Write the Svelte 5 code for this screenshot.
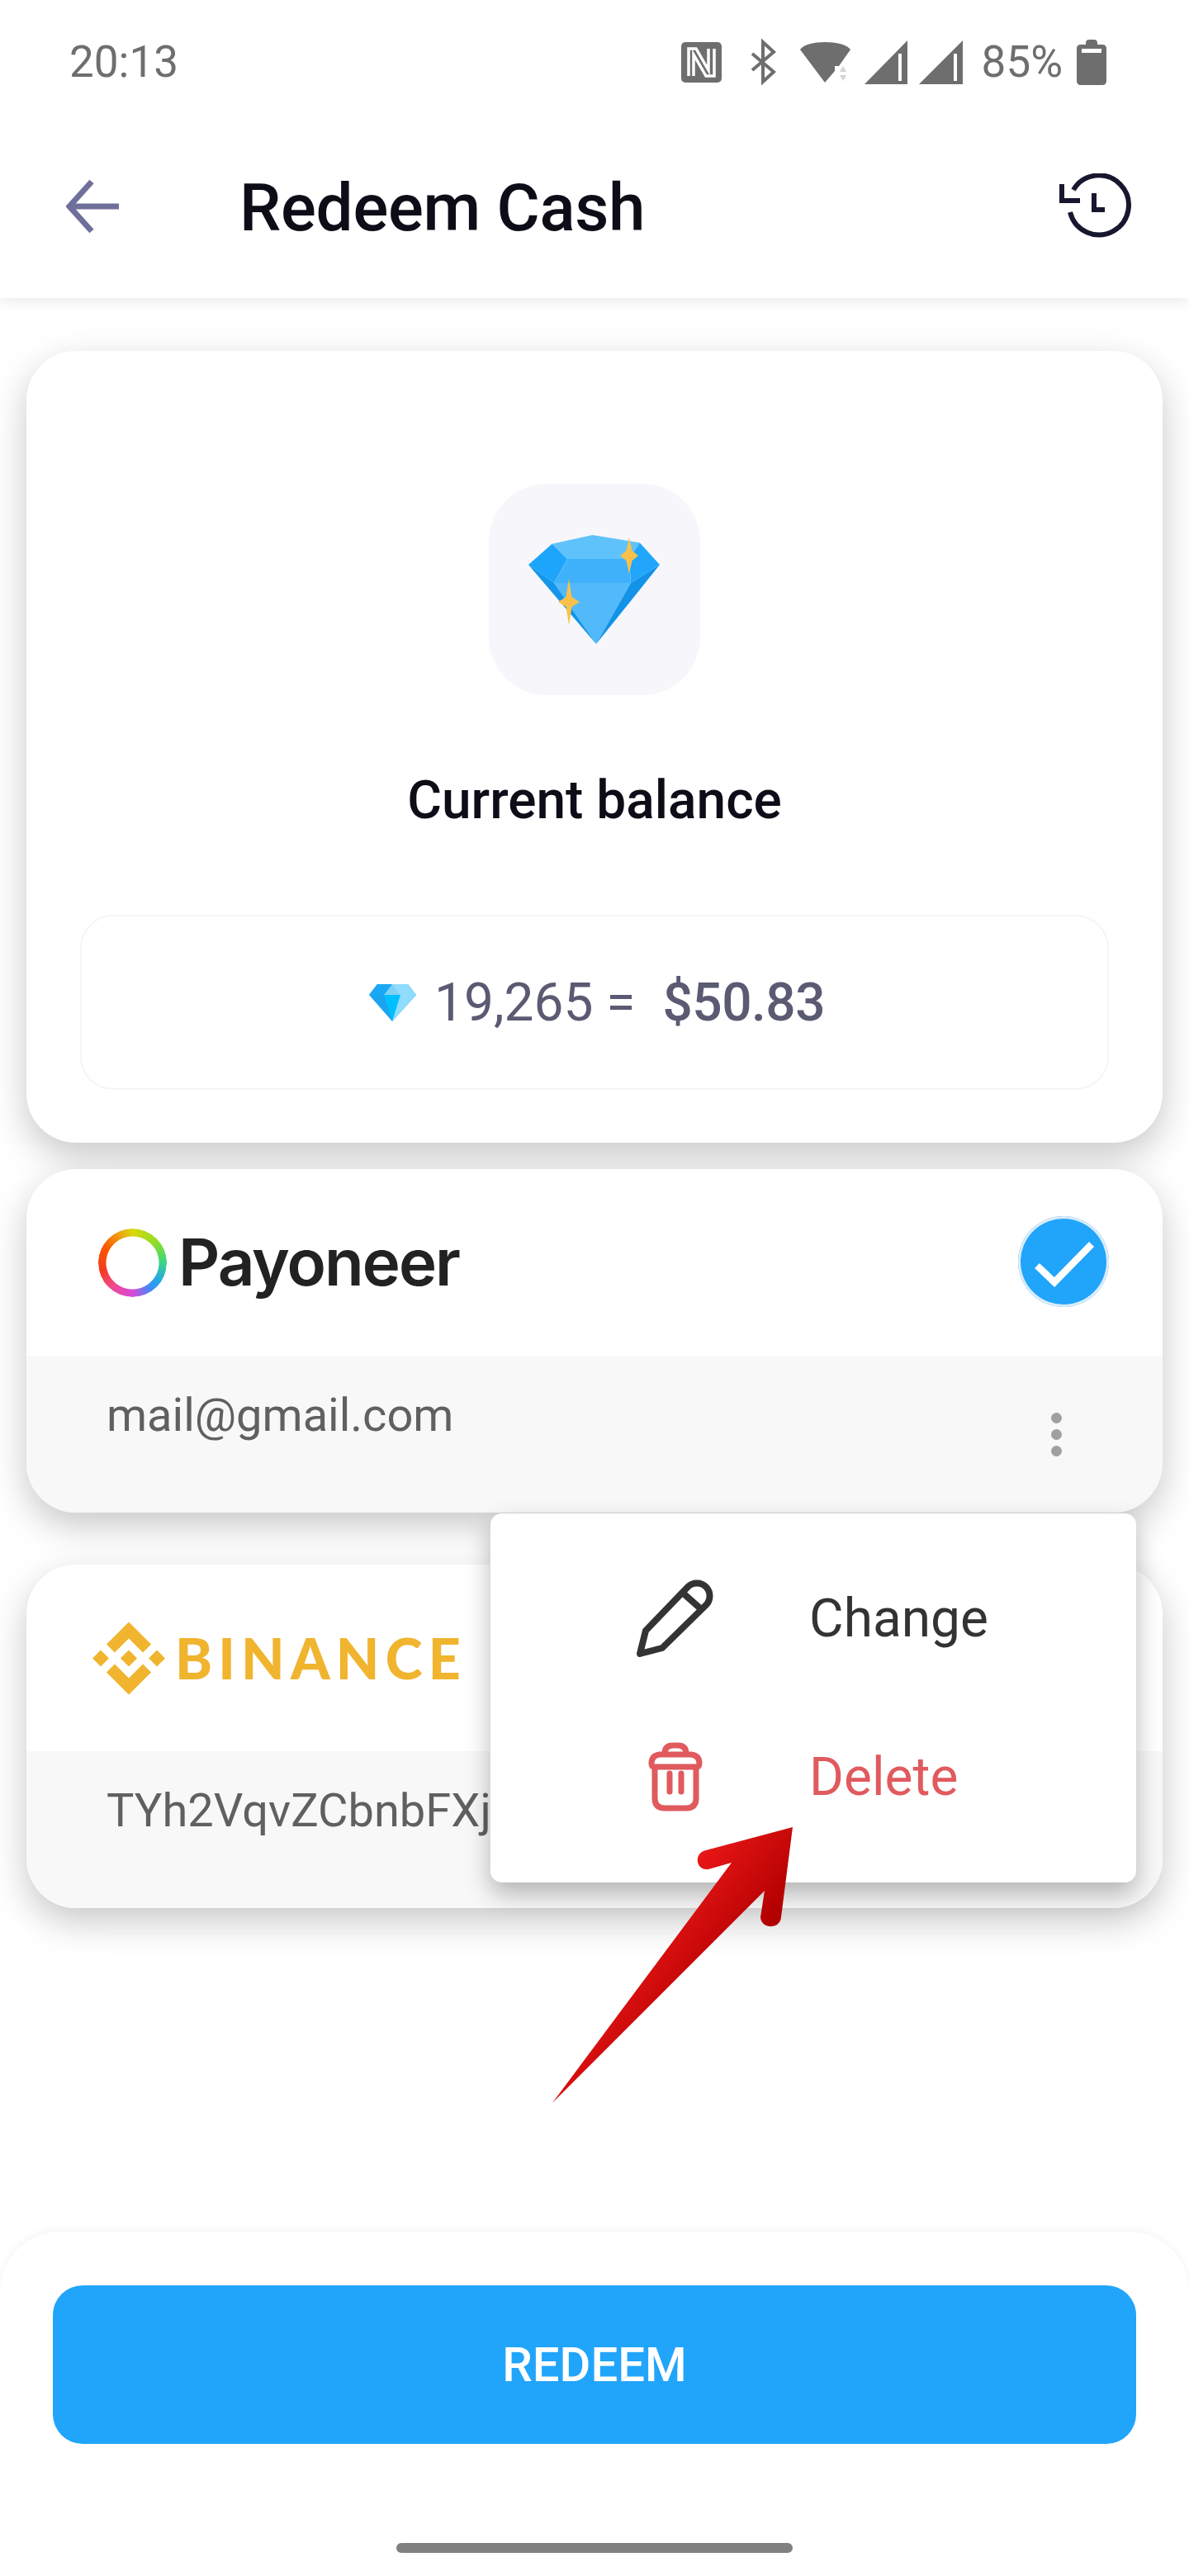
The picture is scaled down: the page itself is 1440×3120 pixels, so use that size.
<script>
  const accounts = [
    { id: 'payoneer', value: 'mail@gmail.com' },
    { id: 'binance', value: 'TYh2VqvZCbnbFXj' }
  ];
  const star = (cx, cy, w, h) =>
    [[cx, cy - h], [cx + 3.5, cy - 6], [cx + w, cy], [cx + 3.5, cy + 6], [cx, cy + h], [cx - 3.5, cy + 6], [cx - w, cy], [cx - 3.5, cy - 6]]
      .map((p) => p.join(',')).join(' ');
</script>

<div class="page">
  <header class="topbar">
    <div class="status">
      <span class="time">20:13</span>
      <div class="status-right">
        <svg class="sys" width="341" height="56" viewBox="0 0 341 56" aria-hidden="true">
          <rect x="0" y="4" width="49" height="49" rx="5" fill="#6e6e6e"/>
          <path d="M9 45 V12 H18 L33 38 V12 M40 12 V45 H30 L15 19 V45" fill="none" stroke="#fff" stroke-width="3.5"/>
          <path d="M86 18 L112 40 L99 52 V4 L112 16 L86 38" fill="none" stroke="#6e6e6e" stroke-width="4"/>
          <path d="M144 13 C152 1 196 1 205 13 L191 33 H186 V39 L174 53 Z" fill="#6e6e6e"/>
          <path d="M192 40 l4 -7 l4 7 Z M192 44 l4 7 l4 -7 Z" fill="#d4d4d4"/>
          <path d="M222 55 L274 2 V55 Z" fill="#6e6e6e"/>
          <rect x="263" y="18" width="4" height="33" fill="#fff"/>
          <path d="M288 55 L341 2 V55 Z" fill="#6e6e6e"/>
          <rect x="330" y="18" width="4" height="33" fill="#fff"/>
        </svg>
        <span class="pct">85%</span>
        <svg width="36" height="56" viewBox="0 0 36 56" aria-hidden="true">
          <path d="M11 5 Q11 1 15 1 H21 Q25 1 25 5 V7 H31 Q36 7 36 12 V51 Q36 56 31 56 H5 Q0 56 0 51 V12 Q0 7 5 7 H11 Z" fill="#6e6e6e"/>
          <rect x="6" y="12" width="24" height="5" fill="#fff"/>
        </svg>
      </div>
    </div>
    <div class="titlebar">
      <svg class="back" width="66" height="66" viewBox="0 0 66 66" aria-hidden="true">
        <path d="M64 33 H6 M31 3 L4 33 L31 63" fill="none" stroke="#6f6f9c" stroke-width="7"/>
      </svg>
      <h1>Redeem Cash</h1>
      <svg class="history" width="90" height="80" viewBox="0 0 90 80" aria-hidden="true">
        <path d="M18 20 A36 36 0 1 1 14 47" fill="none" stroke="#17172f" stroke-width="6"/>
        <path d="M4 13 V33 H26" fill="none" stroke="#17172f" stroke-width="6"/>
        <path d="M43 24 V44 H56" fill="none" stroke="#17172f" stroke-width="6"/>
      </svg>
    </div>
  </header>

  <main class="content">
    <section class="card balance">
      <div class="tile">
        <svg width="160" height="132" viewBox="0 0 160 132" aria-hidden="true">
          <polygon points="28.600,10.700 77.500,0 134.700,9.300 122,29 47,29" fill="#60c2fb"/>
          <polygon points="0,36 28.600,10.700 47,29 31,58" fill="#1da5fb"/>
          <polygon points="134.700,9.300 159,36 124,58 122,29" fill="#22a6fb"/>
          <polygon points="47,29 122,29 124,58 31,58" fill="#3fb2fb"/>
          <polygon points="31,58 124,58 82,132" fill="#52b9fb"/>
          <polygon points="0,36 31,58 82,132" fill="#1495ea"/>
          <polygon points="159,36 124,58 82,132" fill="#1293e8"/>
          <polygon points={star(122, 25, 11, 22)} fill="#f8c14a"/>
          <polygon points={star(49, 81, 13, 28)} fill="#f8c14a"/>
        </svg>
      </div>
      <h2>Current balance</h2>
      <div class="rate">
        <svg width="57" height="45" viewBox="0 0 57 45" aria-hidden="true">
          <polygon points="10,0 47,0 57,13 28,45 0,13" fill="#1ba4f0"/>
          <polygon points="28,0 47,0 57,13 28,45" fill="#8fdcff"/>
          <polygon points="18,13 38,13 28,45" fill="#00bfff"/>
          <polygon points="10,0 28,0 18,13 0,13" fill="#19a8f5"/>
          <polygon points="28,0 38,13 18,13" fill="#7fd0f5"/>
        </svg>
        <span class="gems">19,265 =</span>
        <strong>$50.83</strong>
      </div>
    </section>

    {#each accounts as account (account.id)}
      <section class="card account {account.id}">
        <div class="account-head">
          {#if account.id === 'payoneer'}
            <span class="ring"></span>
            <span class="payoneer-name">Payoneer</span>
            <span class="check">
              <svg width="110" height="110" viewBox="0 0 110 110" aria-hidden="true">
                <path d="M23 60 L44 80 L89 34" fill="none" stroke="#fff" stroke-width="8.500"/>
              </svg>
            </span>
          {:else}
            <svg class="binance-mark" width="88" height="89" viewBox="0 0 126.610 126.610" aria-hidden="true">
              <path fill="#f0b42e" d="M38.730 53.200l24.590-24.580 24.600 24.600 14.300-14.310L63.320 0 24.420 38.900l14.310 14.300zM0 63.310l14.310-14.310 14.310 14.310-14.310 14.310zM38.730 73.410l24.590 24.590 24.600-24.600 14.310 14.290-38.900 38.910-38.910-38.880-.02-.02 14.330-14.290zM97.990 63.310l14.310-14.310 14.310 14.310-14.310 14.310zM77.830 63.300L63.320 48.780 52.590 59.510l-1.240 1.230-2.540 2.540 14.510 14.500 14.510-14.470z"/>
            </svg>
            <span class="binance-name">BINANCE</span>
          {/if}
        </div>
        <div class="account-body">
          <span class="value">{account.value}</span>
          {#if account.id === 'payoneer'}
            <span class="dots"><i></i><i></i><i></i></span>
          {/if}
        </div>
      </section>
    {/each}
  </main>

  <div class="menu">
    <div class="menu-row">
      <span class="menu-icon">
        <svg width="94" height="94" viewBox="0 0 94 94" aria-hidden="true">
          <path d="M4 90 L11 62 L62 9 C68 3 78 3 84 9 C90 15 90 25 84 31 L31 83 Z M59 19 L77 35" fill="none" stroke="#333" stroke-width="8" stroke-linejoin="round" stroke-linecap="round"/>
        </svg>
      </span>
      <span class="menu-text">Change</span>
    </div>
    <div class="menu-row danger">
      <span class="menu-icon">
        <svg width="66" height="84" viewBox="0 0 66 84" aria-hidden="true">
          <path d="M8 30 V68 Q8 80 20 80 H46 Q58 80 58 68 V30 M4 26 Q4 16 14 15 H52 Q62 16 62 26 Q62 30 58 30 H8 Q4 30 4 26 Z M20 14 Q20 4 30 4 H36 Q46 4 46 14 M26 38 V60 M40 38 V60" fill="none" stroke="#e05a5e" stroke-width="7" stroke-linejoin="round" stroke-linecap="round"/>
        </svg>
      </span>
      <span class="menu-text">Delete</span>
    </div>
  </div>

  <svg class="pointer" width="300" height="340" viewBox="660 2210 300 340" aria-hidden="true">
    <defs>
      <linearGradient id="pointerFill" x1="0.45" y1="0.05" x2="0.85" y2="0.4">
        <stop offset="0" stop-color="#ff1f1f"/>
        <stop offset="1" stop-color="#b30000"/>
      </linearGradient>
    </defs>
    <path fill="url(#pointerFill)" d="M960 2213 L946 2322 C945 2337 922 2337 921 2322 L926 2290 L669 2547 L886 2256 L858 2264 C842 2266 840 2244 855 2241 Z"/>
  </svg>

  <footer class="sheet">
    <button class="redeem" type="button">REDEEM</button>
    <span class="homebar"></span>
  </footer>
</div>

<style>
  :global(body) { margin: 0; background: #fff; }
  .page {
    position: relative;
    width: 1440px;
    height: 3120px;
    overflow: hidden;
    background: #fff;
    font-family: Roboto, "Liberation Sans", sans-serif;
  }
  .topbar {
    position: relative;
    z-index: 2;
    height: 361px;
    background: #fff;
    box-shadow: 0 2px 18px rgba(0, 0, 0, 0.1);
  }
  .status {
    height: 150px;
    display: flex;
    justify-content: space-between;
    align-items: center;
    padding: 0 100px 0 84px;
    box-sizing: border-box;
    color: #6e6e6e;
  }
  .time { font-size: 53px; line-height: 1; }
  .status-right { display: flex; align-items: center; }
  .sys { margin-right: 23px; }
  .pct { font-size: 53px; line-height: 1; margin-right: 17px; }
  .titlebar {
    height: 200px;
    display: flex;
    align-items: center;
    padding: 0 68px 0 80px;
    box-sizing: border-box;
  }
  .back { flex: none; }
  h1 {
    flex: 1;
    margin: 4px 0 0 144px;
    font-size: 80px;
    font-weight: 500;
    letter-spacing: -0.300px;
    color: #0d0d18;
    line-height: 1;
  }
  .content {
    display: flex;
    flex-direction: column;
    padding: 64px 32px 0;
  }
  .card {
    background: #fff;
    border-radius: 60px;
    box-shadow: 0 16px 44px rgba(0, 0, 0, 0.22);
    overflow: hidden;
  }
  .balance {
    height: 959px;
    display: flex;
    flex-direction: column;
    align-items: center;
    padding: 161px 65px 64px;
    box-sizing: border-box;
  }
  .tile {
    width: 256px;
    height: 256px;
    border-radius: 70px;
    background: #f7f7fb;
    display: flex;
    align-items: center;
    justify-content: center;
  }
  h2 {
    margin: 88px 0 0;
    font-size: 64px;
    font-weight: 500;
    line-height: 80px;
    color: #0d0d18;
  }
  .rate {
    margin-top: auto;
    align-self: stretch;
    height: 212px;
    padding-left: 6px;
    border: 2px solid #f5f5f7;
    border-radius: 40px;
    display: flex;
    align-items: center;
    justify-content: center;
    box-sizing: border-box;
    font-size: 64px;
    color: #5a5a72;
  }
  .gems { margin-left: 22px; }
  .rate strong { margin-left: 33px; font-weight: 500; letter-spacing: -0.500px; }
  .account { margin-top: 32px; height: 416px; display: flex; flex-direction: column; }
  .binance { margin-top: 63px; }
  .account-head {
    height: 226px;
    flex: none;
    display: flex;
    align-items: center;
    position: relative;
  }
  .ring {
    width: 83px;
    height: 83px;
    margin-left: 87px;
    border-radius: 50%;
    background: conic-gradient(#d8d80a 0deg, #8fdc2a 50deg, #3fd878 85deg, #22a8e8 125deg, #3c8cf8 145deg, #d848d8 180deg, #f04a90 220deg, #f43a20 255deg, #f85a00 300deg, #f0a010 335deg, #d8d80a 360deg);
    -webkit-mask: radial-gradient(circle, transparent 31.500px, #000 32.500px);
    mask: radial-gradient(circle, transparent 31.500px, #000 32.500px);
  }
  .payoneer-name {
    margin-left: 14px;
    font-family: Inter, sans-serif;
    font-weight: 600;
    font-size: 78px;
    letter-spacing: -2px;
    color: #222;
    line-height: 1;
  }
  .check {
    position: absolute;
    right: 65px;
    top: 57px;
    width: 110px;
    height: 110px;
    border-radius: 50%;
    background: #21a5fb;
    box-shadow: inset 0 0 0 3px #dcecf8;
  }
  .check svg { display: block; }
  .binance-mark { margin-left: 80px; flex: none; }
  .binance-name {
    margin-left: 12px;
    font-family: Lato, sans-serif;
    font-weight: 900;
    font-size: 68px;
    letter-spacing: 7.200px;
    color: #f0b42e;
    line-height: 1;
  }
  .account-body {
    flex: 1;
    background: #f8f8f8;
    position: relative;
    padding-left: 97px;
  }
  .value {
    display: block;
    margin-top: 40px;
    font-size: 56px;
    line-height: 64px;
    color: #606060;
    white-space: nowrap;
  }
  .dots {
    position: absolute;
    left: 1241px;
    top: 69px;
    display: flex;
    flex-direction: column;
    gap: 7px;
  }
  .dots i {
    width: 13px;
    height: 13px;
    border-radius: 50%;
    background: #a0a0a0;
  }
  .menu {
    position: absolute;
    z-index: 3;
    left: 594px;
    top: 1833px;
    width: 782px;
    height: 447px;
    padding: 31px 0 0 160px;
    box-sizing: border-box;
    background: #fff;
    border-radius: 14px;
    box-shadow: 0 14px 30px rgba(0, 0, 0, 0.28);
  }
  .menu-row {
    height: 192px;
    display: flex;
    align-items: center;
    color: #333;
    font-size: 64px;
  }
  .menu-icon {
    width: 128px;
    margin-right: 98px;
    display: flex;
    justify-content: center;
  }
  .danger { color: #e05a5e; }
  .pointer {
    position: absolute;
    z-index: 4;
    left: 660px;
    top: 2210px;
  }
  .sheet {
    position: absolute;
    left: 0;
    right: 0;
    top: 2703px;
    bottom: 0;
    z-index: 1;
    background: #fff;
    border-radius: 72px 72px 0 0;
    box-shadow: 0 -2px 10px rgba(0, 0, 0, 0.05);
    display: flex;
    flex-direction: column;
    align-items: center;
    padding: 65px 64px 0;
  }
  .redeem {
    width: 100%;
    height: 192px;
    border: 0;
    border-radius: 36px;
    background: #21a5fb;
    color: #fff;
    font-family: Roboto, sans-serif;
    font-size: 58px;
    font-weight: 500;
    padding: 0;
  }
  .homebar {
    width: 480px;
    height: 12px;
    margin-top: 120px;
    border-radius: 6px;
    background: #808080;
  }
</style>
